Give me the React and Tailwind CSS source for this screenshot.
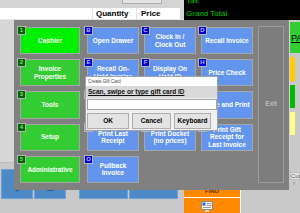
export default function App() {
  return (
    <div className="relative w-[300px] h-[213px] overflow-hidden bg-[#c9c9c9] font-['Liberation_Sans',Arial,sans-serif] select-none">
      {/* top bar */}
      <div className="flex h-[20px]">
        <div className="w-[184px] flex flex-col bg-[#d4d4d4]">
          <div className="h-[8px] flex overflow-hidden">
            <div className="ml-[122px] -mt-[8px] w-[40px] h-[12px] bg-[#e3e3e3] border border-[#adadad] text-[7px] font-bold leading-[10px] text-center text-black">
              Search
            </div>
          </div>
          <div className="h-[11px] w-[180px] bg-white flex text-[8px] font-bold leading-[11px] text-black">
            <div className="w-[93px] border-r border-[#e2e2e2]" />
            <div className="w-[44px] pl-[3px] border-r border-[#e2e2e2]">Quantity</div>
            <div className="w-[43px] pl-[4px]">Price</div>
          </div>
          <div className="h-[1px] bg-[#e6e6e6]" />
        </div>
        <div className="flex-1 bg-black overflow-hidden">
          <div className="-mt-[6px] pl-[2px] text-[8px] leading-[13px] text-[#00c800]">
            <div>Tax</div>
            <div>Grand Total</div>
          </div>
        </div>
      </div>

      {/* page body behind the menu */}
      <div className="flex h-[193px]">
        <div className="w-[290px] flex flex-col">
          <div className="h-[149px] flex flex-col bg-[#d6d6d6]">
            <div className="flex-1" />
            <div className="h-[1px] bg-[#bdbdbd]" />
            <div className="h-[6px] bg-[#cacaca]" />
          </div>
          <div className="h-[44px] flex items-start">
            <div className="ml-[1px] w-[32px] h-[30px] bg-[#4d89c6] border border-[#6d9fd3] flex items-end justify-center pb-[4px]">
              <span className="text-[7px] leading-[7px] font-bold text-[#2f5f92]">+</span>
            </div>
            <div className="ml-[1px] w-[32px] h-[30px] bg-[#4d89c6] border border-[#6d9fd3] flex items-end justify-center pb-[7px]">
              <div className="w-[7px] h-[2px] bg-[#2f5f92]" />
            </div>
            <div className="ml-[13px] w-[49px] h-[30px] bg-[#4d89c6] border border-[#6d9fd3]" />
            <div className="ml-[1px] w-[49px] h-[30px] bg-[#4d89c6] border border-[#6d9fd3]" />
            <div className="ml-[6px] w-[56px] h-[44px] flex flex-col">
              <div className="h-[28px] bg-[#ff8a00] flex items-end justify-center pb-[3px]">
                <span className="text-[6px] leading-[6px] font-bold text-[#6b3500]">FIND</span>
              </div>
              <div className="h-[1px] bg-white" />
              <div className="flex-1 bg-[#ff8a00] flex justify-center pt-[3px] pr-[10px]">
                <svg width="12" height="11" viewBox="0 0 12 11">
                  <rect x="0.5" y="0.5" width="11" height="8" fill="#f4f4f4" stroke="#8a8a8a" />
                  <rect x="1.5" y="1.5" width="3" height="3" fill="#2b6fd0" />
                  <rect x="6" y="2" width="4.5" height="1" fill="#9a9a9a" />
                  <rect x="6" y="4" width="4.5" height="1" fill="#9a9a9a" />
                  <rect x="2" y="6" width="8" height="1" fill="#9a9a9a" />
                  <rect x="4" y="9" width="4" height="2" fill="#d8d8d8" />
                </svg>
              </div>
            </div>
            <div className="w-[1px] h-[44px] bg-white" />
          </div>
        </div>
        <div className="w-[10px] flex flex-col pt-[2px] overflow-hidden">
          <div className="h-[31px] bg-[#33cc33] pl-[1px] pt-[11px] text-[9px] leading-[10px] text-black underline whitespace-nowrap">
            PAY
          </div>
          <div className="mt-[4px] w-[5px] h-[24px] bg-[#ffcc00]" />
          <div className="mt-[4px] w-[5px] h-[23px] bg-[#00bb00]" />
          <div className="mt-[4px] w-[5px] h-[23px] bg-[#ffff88]" />
          <div className="mt-[37px] h-[8px] bg-[#e6e6e6] border border-[#bdbdbd] text-[6px] leading-[6px] text-[#555] whitespace-nowrap">
            Cust
          </div>
          <div className="pl-[3px] text-[6px] leading-[6px] text-[#777]">r</div>
        </div>
      </div>

      {/* function menu overlay */}
      <div className="absolute left-[14px] top-[20px] w-[275px] h-[170px] bg-[#808080] pt-[7px] pl-[6px]">
        <div className="grid grid-cols-[62px_52px_52px_52px_26px] grid-rows-5 h-[156px] gap-x-[5px] gap-y-[5px]">
          <GreenKey row="row-start-1" badge="1" bright>Cashier</GreenKey>
          <GreenKey row="row-start-2" badge="2">Invoice<br />Properties</GreenKey>
          <GreenKey row="row-start-3" badge="3">Tools</GreenKey>
          <GreenKey row="row-start-4" badge="4">Setup</GreenKey>
          <GreenKey row="row-start-5" badge="5">Administrative</GreenKey>

          <BlueKey pos="col-start-2 row-start-1" badge="B">Open Drawer</BlueKey>
          <BlueKey pos="col-start-3 row-start-1" badge="C">Clock In /<br />Clock Out</BlueKey>
          <BlueKey pos="col-start-4 row-start-1" badge="D">Recall Invoice</BlueKey>

          <BlueKey pos="col-start-2 row-start-2" badge="E">Recall On-<br />Hold Invoice</BlueKey>
          <BlueKey pos="col-start-3 row-start-2" badge="F">Display On<br />Hold ID</BlueKey>
          <BlueKey pos="col-start-4 row-start-2" badge="H">Price Check</BlueKey>

          {/* these two sit fully under the dialog */}
          <BlueKey pos="col-start-2 row-start-3" badge="I" />
          <BlueKey pos="col-start-3 row-start-3" badge="J" />
          <BlueKey pos="col-start-4 row-start-3" badge="K">Save and Print</BlueKey>

          <BlueKey pos="col-start-2 row-start-4" badge="L">Print Last<br />Receipt</BlueKey>
          <BlueKey pos="col-start-3 row-start-4" badge="M">Print Docket<br />(no prices)</BlueKey>
          <BlueKey pos="col-start-4 row-start-4" badge="N">Print Gift<br />Receipt for<br />Last Invoice</BlueKey>

          <BlueKey pos="col-start-2 row-start-5" badge="O">Pullback<br />Invoice</BlueKey>

          <div className="col-start-5 row-start-1 row-span-5 -mt-[1px] bg-[#7d7d7d] border border-[#9c9c9c] flex items-center justify-center text-[7px] text-[#d2d2d2]">
            Exit
          </div>
        </div>
      </div>

      {/* Create Gift Card dialog */}
      <div className="absolute left-[85px] top-[76px] w-[133px] h-[55px] bg-[#f0f0f0] border border-[#9aa2ac] flex flex-col">
        <div className="h-[9px] bg-white pl-[2px] text-[4.5px] leading-[9px] text-[#444]">Create Gift Card</div>
        <div className="h-[12px] bg-[#d9d9d9] pl-[2px] text-[6.5px] leading-[12px] font-bold underline text-[#111]">
          Scan, swipe or type gift card ID
        </div>
        <div className="mt-[1px] ml-[1px] h-[11px] bg-white border border-[#a3a3a3]" />
        <div className="mt-[3px] ml-[1px] flex gap-[3px]">
          <DialogButton w="w-[42px]">OK</DialogButton>
          <DialogButton w="w-[39px]">Cancel</DialogButton>
          <DialogButton w="w-[37px]">Keyboard</DialogButton>
        </div>
      </div>
    </div>
  );
}

function GreenKey({ row, badge, bright, children }) {
  return (
    <div
      className={`col-start-1 ${row} relative w-[60px] border border-[#a6a6a6] flex items-center justify-center text-center text-white text-[6.5px] leading-[7.5px] font-bold ${
        bright ? 'bg-[#00f000]' : 'bg-[#33cc33]'
      }`}
    >
      <span className="absolute -left-[4px] -top-[2px] w-[9px] h-[9px] bg-[#006400] border border-[#b4b4b4] text-[6px] leading-[7px] text-center font-bold text-[#8fd88f]">
        {badge}
      </span>
      <span>{children}</span>
    </div>
  );
}

function BlueKey({ pos, badge, children }) {
  return (
    <div className={`${pos} relative bg-[#6495ed] border border-[#a6a6a6] flex items-center justify-center text-center text-white text-[6.5px] leading-[7.5px] font-bold`}>
      <span className="absolute -left-[4px] -top-[2px] w-[9px] h-[9px] bg-[#0000d0] border border-[#b4b4b4] text-[6px] leading-[7px] text-center font-bold text-[#b8b8ff]">
        {badge}
      </span>
      {children && <span className="whitespace-nowrap">{children}</span>}
    </div>
  );
}

function DialogButton({ w, children }) {
  return (
    <div className={`${w} h-[16px] bg-[#e3e3e3] border border-[#adadad] flex items-center justify-center text-[6.5px] font-bold text-black`}>
      {children}
    </div>
  );
}
